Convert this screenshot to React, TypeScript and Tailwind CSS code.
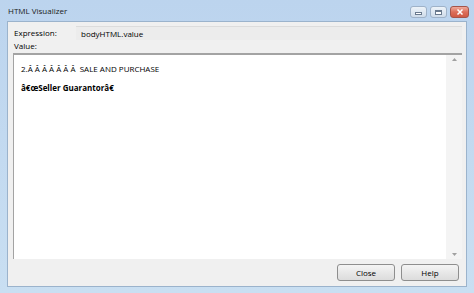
import React from "react";

const font = { fontFamily: '"Open Sans", "Noto Sans", sans-serif' };

function CaptionButton({ kind }: { kind: "min" | "max" | "close" }) {
  if (kind === "close") {
    return (
      <div className="flex h-[12px] w-[19px] items-center justify-center rounded-[3px] border border-[#a4544a] bg-gradient-to-b from-[#eeaa9c] via-[#dc6e5a] to-[#d05a44]">
        <svg width="8" height="6" viewBox="0 0 8 6">
          <path d="M1.5 0.5 L6.5 5.5 M6.5 0.5 L1.5 5.5" stroke="#fff" strokeWidth="1.5" />
        </svg>
      </div>
    );
  }
  return (
    <div className="flex h-[12px] w-[17px] items-center justify-center rounded-[3px] border border-[#9fb2c8] bg-gradient-to-b from-[#edf3f9] to-[#cfdcea]">
      {kind === "min" ? (
        <div className="mt-[3px] h-[3px] w-[7px] border border-[#6a7a8e] bg-white" />
      ) : (
        <div className="h-[5px] w-[7px] border border-[#6a7a8e] border-t-2 bg-white" />
      )}
    </div>
  );
}

export default function App() {
  return (
    <div
      className="flex h-[293px] w-[474px] flex-col overflow-hidden bg-gradient-to-b from-[#bcd4ee] to-[#c9dff2] text-[8px] text-black"
      style={font}
    >
      <div className="flex h-[21px] items-start justify-between pl-[8px] pr-[5px]">
        <span className="mt-[5px] text-[8px] text-[#1b1b1b]">HTML Visualizer</span>
        <div className="mt-[6px] flex gap-[3px]">
          <CaptionButton kind="min" />
          <CaptionButton kind="max" />
          <CaptionButton kind="close" />
        </div>
      </div>
      <div className="mx-[7px] mb-[6px] flex flex-1 flex-col border border-[#9bb3cc] bg-[#f0f0f0] pb-[5px] pl-[5px] pr-[4px]">
        <div className="mt-[4px] flex h-[14px] items-center">
          <span className="w-[63px] pl-[1px]">Expression:</span>
          <div className="flex h-[14px] flex-1 items-center border-t border-[#dcdcdc] bg-[#ececec] pl-[5px]">
            bodyHTML.value
          </div>
        </div>
        <div className="mt-[1px] pl-[1px] leading-[10px]">Value:</div>
        <div className="mt-[2px] flex h-[206px] border-t-2 border-l border-[#a3a3a3] bg-white">
          <div className="flex-1 pl-[7px] pt-[8px]">
            <div>2.Â Â Â Â Â Â Â&nbsp; SALE AND PURCHASE</div>
            <div className="mt-[7px] font-bold">â€œSeller Guarantorâ€</div>
          </div>
          <div className="flex w-[16px] flex-col items-center justify-between bg-[#f4f4f4] py-[3px]">
            <svg width="5" height="3" viewBox="0 0 5 3">
              <path d="M0 3 L2.5 0 L5 3 Z" fill="#a0a0a0" />
            </svg>
            <svg width="5" height="3" viewBox="0 0 5 3">
              <path d="M0 0 L2.5 3 L5 0 Z" fill="#a0a0a0" />
            </svg>
          </div>
        </div>
        <div className="mt-[5px] flex justify-end gap-[6px] pr-[3px]">
          <button className="h-[17px] w-[58px] rounded-[3px] border border-[#8e8e8e] bg-gradient-to-b from-[#f4f4f4] to-[#dcdcdc] text-[8px]">
            Close
          </button>
          <button className="h-[17px] w-[58px] rounded-[3px] border border-[#8e8e8e] bg-gradient-to-b from-[#f4f4f4] to-[#dcdcdc] text-[8px]">
            Help
          </button>
        </div>
      </div>
    </div>
  );
}
